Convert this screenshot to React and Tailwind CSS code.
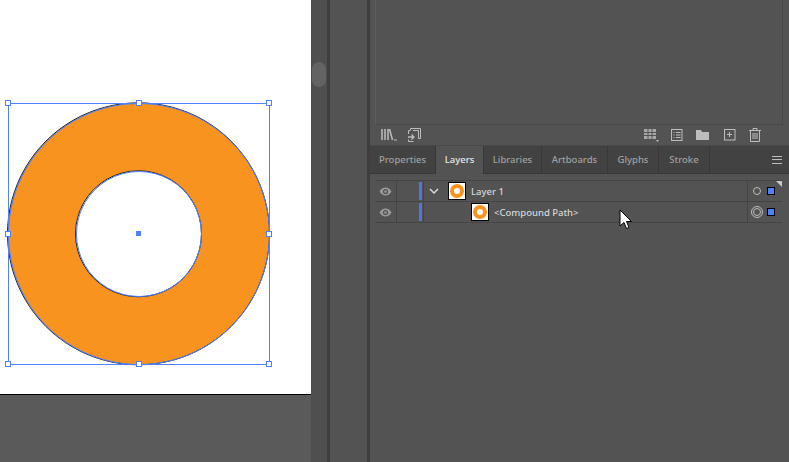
const tabs = [
  { label: 'Properties', w: 'w-[66px]' },
  { label: 'Layers', w: 'w-[48px]', active: true },
  { label: 'Libraries', w: 'w-[58px]' },
  { label: 'Artboards', w: 'w-[66px]' },
  { label: 'Glyphs', w: 'w-[51px]' },
  { label: 'Stroke', w: 'w-[51px]' },
];

const Handle = ({ x, y }) => (
  <rect x={x - 2.5} y={y - 2.5} width="5" height="5" fill="#fff" stroke="#4f80ff" strokeWidth="1" />
);

const Artwork = () => (
  <svg width="311" height="394" viewBox="0 0 311 394" className="block">
    <path
      fillRule="evenodd"
      fill="#f7931e"
      stroke="#1c2333"
      strokeWidth="1"
      d="M138.500 102.800a131 131 0 1 0 .01 0zM138.500 170.800a63 63 0 1 1-.01 0z"
    />
    <path
      fill="none"
      stroke="#4f80ff"
      strokeWidth="1"
      d="M139 103.500a130.500 130.500 0 1 0 .01 0zM139 171.500a62.500 62.500 0 1 1-.01 0z"
    />
    <rect x="8.500" y="103.500" width="261" height="261" fill="none" stroke="#4f80ff" />
    <Handle x={8} y={103} />
    <Handle x={139} y={103} />
    <Handle x={269} y={103} />
    <Handle x={8} y={234} />
    <Handle x={269} y={234} />
    <Handle x={8} y={364} />
    <Handle x={139} y={364} />
    <Handle x={269} y={364} />
    <rect x="136" y="231" width="5" height="5" fill="#4f80ff" />
  </svg>
);

const Thumb = () => (
  <div className="w-[18px] h-[18px] bg-white border border-black flex items-center justify-center shrink-0">
    <div className="w-[14px] h-[14px] rounded-full border-[4px] border-[#f7931e] bg-white" />
  </div>
);

const Eye = () => (
  <svg width="13" height="9" viewBox="0 0 13 9">
    <path d="M0.500 4.500C2 2 4 0.500 6.500 0.500S11 2 12.500 4.500C11 7 9 8.500 6.500 8.500S2 7 0.500 4.500z" fill="#9a9a9a" />
    <circle cx="6.500" cy="4.500" r="2.600" fill="#535353" />
    <circle cx="6.500" cy="4.500" r="1.300" fill="#9a9a9a" />
  </svg>
);

const LayerRow = ({ children, target, corner }) => (
  <div className="relative h-[21px] flex items-stretch border-b border-[#444444]">
    <div className="w-[22px] flex items-center justify-center border-r border-[#444444]"><Eye /></div>
    <div className="w-[22px]" />
    <div className="w-[3px] my-[1px] bg-[#4f74e3]" />
    <div className="flex-1 flex items-center min-w-0 ml-px border-l border-[#444444]">{children}</div>
    <div className="w-[35px] flex items-center gap-[3px] pl-[2px] border-l border-[#444444]">
      <div className="w-[14px] flex justify-center">{target}</div>
      <div className="w-[8px] h-[8px] bg-[#4f80ff] border border-black" />
    </div>
    {corner && (
      <svg width="6" height="6" viewBox="0 0 6 6" className="absolute top-0 right-0">
        <path d="M0 0H6V6z" fill="#c8c8c8" />
      </svg>
    )}
  </div>
);

const ToolIcon = ({ children, w = 16 }) => (
  <svg width={w} height="14" viewBox={`0 0 ${w} 14`} fill="none" stroke="#bdbdbd" strokeWidth="1">
    {children}
  </svg>
);

export default function App() {
  return (
    <div className="w-[789px] h-[462px] overflow-hidden flex bg-[#535353] text-[#cfcfcf] font-['Noto_Sans',sans-serif]">
      <div className="w-[311px] flex flex-col shrink-0 bg-[#5a5a5a]">
        <div className="bg-white h-[394px] overflow-hidden"><Artwork /></div>
        <div className="h-px bg-black" />
      </div>

      <div className="w-[16px] bg-[#4f4f4f] pt-[62px] px-[1px] shrink-0">
        <div className="h-[25px] rounded-[7px] bg-[#636363]" />
      </div>
      <div className="w-[3px] bg-[#3e3e3e] shrink-0" />
      <div className="w-[37px] bg-[#535353] shrink-0" />
      <div className="w-[3px] bg-[#3e3e3e] shrink-0" />

      <div className="flex-1 flex flex-col min-w-0">
        <div className="h-[125px] pl-[5px] pr-[6px]">
          <div className="h-full border-l border-l-[#5e5e5e] border-r border-r-[#484848] border-b border-b-[#484848]" />
        </div>

        <div className="h-[21px] flex items-center pl-[11px] pr-[28px] border-b border-[#484848]">
          <ToolIcon w={16}>
            <path d="M1 1v11M4 1v11" strokeWidth="1.500" />
            <path d="M7 1v11" strokeWidth="1.500" />
            <path d="M8.500 1l3 11" strokeWidth="1.500" />
            <path d="M13 12h3" />
          </ToolIcon>
          <div className="w-[11px]" />
          <ToolIcon w={13}>
            <path d="M2.500 2.500V0.500h10v10h-2" />
            <path d="M5 2.500h5.500v8M0.500 6V2.500H2" />
            <path d="M0.500 11.500v2h5" />
            <path d="M0 9h5.500M3.500 6.500L6 9l-2.500 2.500" strokeWidth="1.300" />
          </ToolIcon>
          <div className="flex-1" />
          <svg width="15" height="13" viewBox="0 0 15 13" className="mr-[12px]">
            <path d="M0 0h12v10H0z" fill="#a8a8a8" />
            <path d="M4 0v10M8 0v10M0 3.500h12M0 6.500h12" stroke="#535353" strokeWidth="1" />
            <path d="M12 11h3l-1.500 2z" fill="#bdbdbd" />
          </svg>
          <div className="mr-[13px] flex">
            <ToolIcon w={12}>
              <rect x="0.500" y="1.500" width="10.500" height="11" />
              <path d="M2.500 4.500h1M5 4.500h4.500M2.500 7h1M5 7h4.500M2.500 9.500h1M5 9.500h4.500" />
            </ToolIcon>
          </div>
          <svg width="13" height="10" viewBox="0 0 13 10" className="mr-[15px]"><path d="M0 0h5l1 2h7v8H0z" fill="#bdbdbd" /></svg>
          <div className="mr-[13px] flex">
            <ToolIcon w={12}>
              <rect x="0.500" y="1.500" width="10.500" height="10.500" />
              <path d="M5.500 4v5M3 6.500h5" />
            </ToolIcon>
          </div>
          <ToolIcon w={12}>
            <path d="M0 2.500h12M4 2.500V0.500h4v2M1.500 2.500v11h9v-11M4 5v6M6 5v6M8 5v6" />
          </ToolIcon>
        </div>

        <div className="h-[28px] flex bg-[#424242] border-b border-[#383838] text-[9.5px] font-medium">
          {tabs.map(t => (
            <div
              key={t.label}
              className={`${t.w} flex items-center justify-center pt-px border-r border-[#383838] ${t.active ? 'bg-[#535353] text-[#e8e8e8] -mb-px' : 'text-[#a0a0a0]'}`}
            >
              {t.label}
            </div>
          ))}
          <div className="flex-1 flex justify-end items-center pr-[7px]">
            <div className="w-[10px] h-[8px] border-y border-[#bdbdbd] flex items-center">
              <div className="w-full h-px bg-[#bdbdbd]" />
            </div>
          </div>
        </div>

        <div className="pt-[6px] pl-[5px] pr-[7px] text-[9.5px] font-medium text-[#d6d6d6]">
          <div className="border-t border-[#444444]">
            <LayerRow
              corner
              target={<div className="w-[8px] h-[8px] rounded-full border border-[#bdbdbd]" />}
            >
              <svg width="10" height="6" viewBox="0 0 10 6" className="ml-[5px] mr-[9px]">
                <path d="M1 1l4 4 4-4" fill="none" stroke="#d6d6d6" strokeWidth="1.500" />
              </svg>
              <Thumb />
              <span className="ml-[5px] pt-[2px]">Layer 1</span>
            </LayerRow>
            <LayerRow
              target={
                <div className="w-[12px] h-[12px] rounded-full border border-[#bdbdbd] flex items-center justify-center">
                  <div className="w-[8px] h-[8px] rounded-full border border-[#bdbdbd]" />
                </div>
              }
            >
              <div className="ml-[47px]"><Thumb /></div>
              <span className="ml-[5px] pt-[2px]">&lt;Compound Path&gt;</span>
            </LayerRow>
          </div>
        </div>
      </div>

      <svg width="14" height="21" viewBox="0 0 14 21" className="absolute left-[619px] top-[209px]">
        <path d="M1 1v16l4-3.500 2.500 6 2.500-1-2.500-6H12.500z" fill="#fff" stroke="#000" strokeWidth="1" />
      </svg>
    </div>
  );
}
